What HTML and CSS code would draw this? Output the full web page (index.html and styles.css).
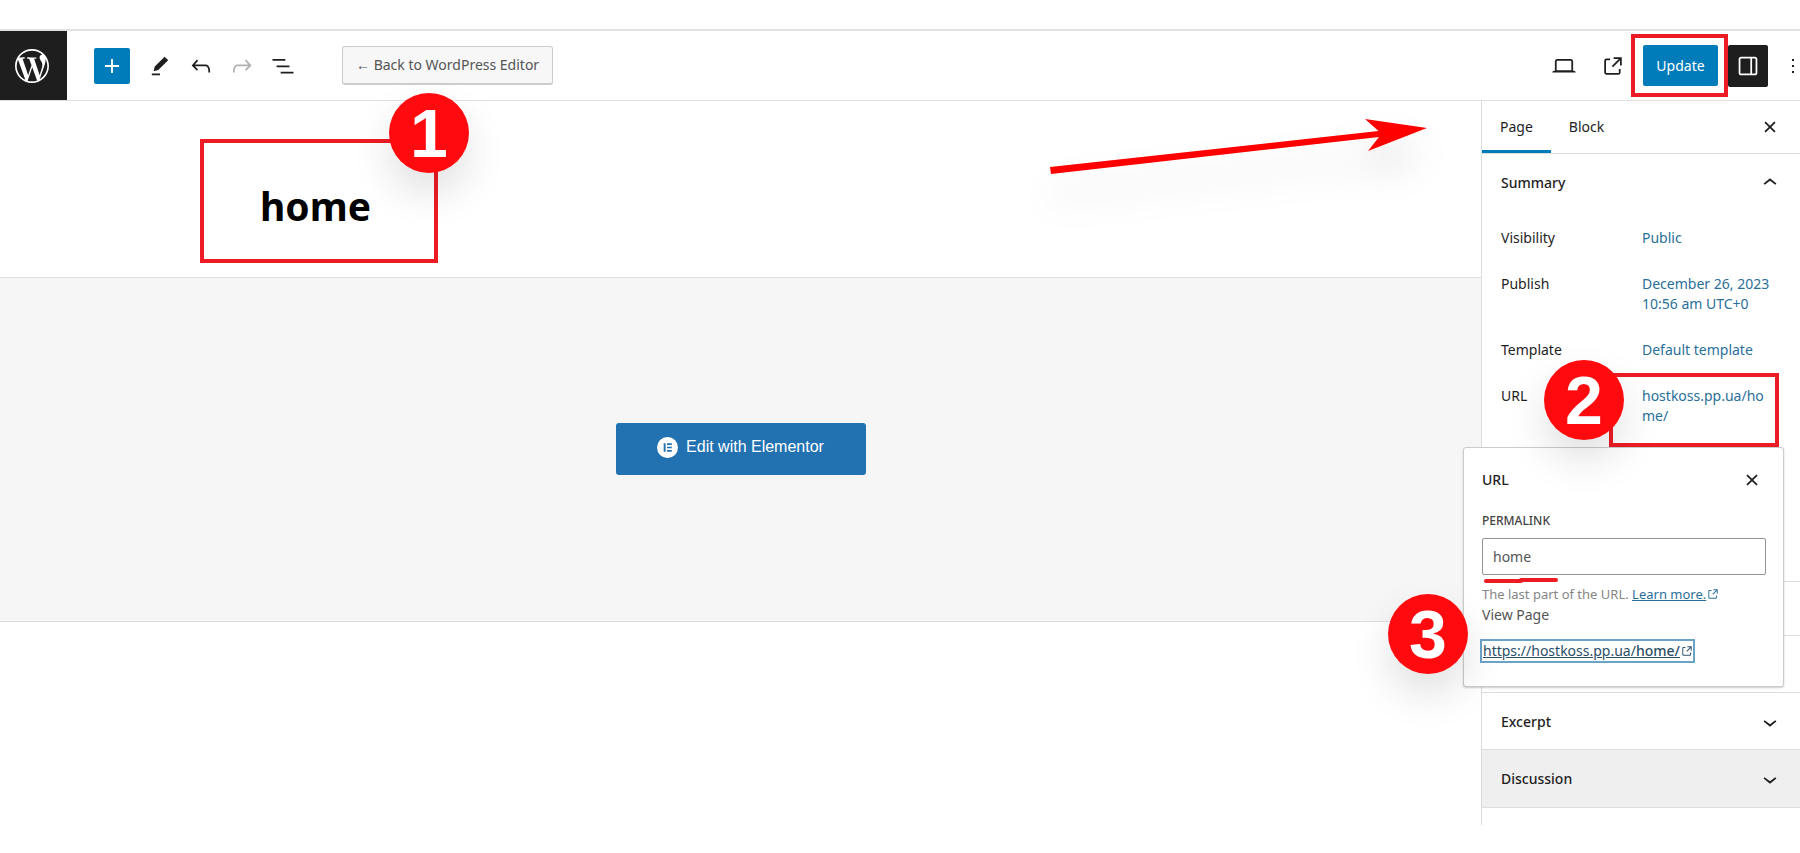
FILE: index.html
```html
<!DOCTYPE html>
<html lang="en">
<head>
<meta charset="utf-8">
<title>Edit Page</title>
<link rel="stylesheet" href="styles.css">
</head>
<body>
<div class="editor">
  <header class="toolbar">
    <a class="wp-logo" href="#" aria-label="View Pages">
      <svg viewBox="0 0 24 24"><path d="M21.469 6.825c.84 1.537 1.318 3.3 1.318 5.175 0 3.979-2.156 7.456-5.363 9.325l3.295-9.527c.615-1.54.82-2.771.82-3.864 0-.405-.026-.78-.07-1.11m-7.981.105c.647-.03 1.232-.105 1.232-.105.582-.075.514-.93-.067-.899 0 0-1.755.135-2.88.135-1.064 0-2.85-.15-2.85-.15-.585-.03-.661.855-.075.885 0 0 .54.061 1.125.09l1.68 4.605-2.37 7.08L5.354 6.9c.649-.03 1.234-.1 1.234-.1.585-.075.516-.93-.065-.896 0 0-1.746.138-2.874.138-.2 0-.438-.008-.69-.015C4.911 3.15 8.235 1.215 12 1.215c2.809 0 5.365 1.072 7.286 2.833-.046-.003-.091-.009-.141-.009-1.06 0-1.812.923-1.812 1.914 0 .89.513 1.643 1.06 2.531.411.72.89 1.643.89 2.977 0 .915-.354 1.994-.821 3.479l-1.075 3.585-3.9-11.61.001.014zM12 22.784c-1.059 0-2.081-.153-3.048-.437l3.237-9.406 3.315 9.087c.024.053.05.101.078.149-1.12.393-2.325.609-3.582.609M1.211 12c0-1.564.336-3.05.935-4.39L7.29 21.709C3.694 19.96 1.212 16.271 1.211 12M12 0C5.385 0 0 5.385 0 12s5.385 12 12 12 12-5.385 12-12S18.615 0 12 0"/></svg>
    </a>
    <div class="tools">
      <button class="tool tool-add" aria-label="Add block"><svg class="icon" viewBox="0 0 24 24"><path d="M18 11.2h-5.2V6h-1.6v5.2H6v1.6h5.2V18h1.6v-5.2H18z"/></svg></button>
      <button class="tool" aria-label="Tools"><svg class="icon" viewBox="0 0 24 24"><path d="m19 7-3-3-8.5 8.5-1 4 4-1L19 7Zm-7 11.5H5V20h7v-1.5Z"/></svg></button>
      <button class="tool" aria-label="Undo"><svg class="icon" viewBox="0 0 24 24"><path d="M18.3 11.7c-.6-.6-1.4-.9-2.3-.9H6.7l2.9-3.3-1.1-1-4.5 5L8.5 16l1-1-2.7-2.7H16c.5 0 .9.2 1.3.5 1 1 1 3.4 1 4.5v.3h1.5v-.2c0-1.5 0-4.3-1.5-5.7z"/></svg></button>
      <button class="tool tool-off" aria-label="Redo"><svg class="icon" viewBox="0 0 24 24"><path d="M15.6 6.5l-1.1 1 2.9 3.3H8c-.9 0-1.7.3-2.3.9-1.4 1.5-1.4 4.2-1.4 5.6v.2h1.5v-.3c0-1.1 0-3.5 1-4.5.3-.3.7-.5 1.3-.5h9.2L14.5 15l1.1 1.1 4.6-4.6-4.6-5z"/></svg></button>
      <button class="tool" aria-label="Document overview"><svg class="icon" viewBox="0 0 24 24"><path d="M3 6h11v1.5H3V6Zm3.5 5.5h11V13h-11v-1.5ZM21 17H10v1.5h11V17Z"/></svg></button>
    </div>
    <button class="back">← Back to WordPress Editor</button>
    <div class="actions">
      <button class="tool" aria-label="Preview"><svg class="icon" viewBox="0 0 24 24"><path d="M20.5 16h-.7V8c0-1.1-.9-2-2-2H6.2c-1.1 0-2 .9-2 2v8h-.7c-.8 0-1.5.7-1.5 1.5h20c0-.8-.7-1.5-1.5-1.5zM5.7 8c0-.3.2-.5.5-.5h11.6c.3 0 .5.2.5.5v7.6H5.7V8z"/></svg></button>
      <button class="tool" aria-label="View page"><svg class="icon" viewBox="0 0 24 24"><path d="M19.5 4.5h-7V6h4.44l-5.97 5.97 1.06 1.06L18 7.06v4.44h1.5v-7Zm-13 1a2 2 0 0 0-2 2v10a2 2 0 0 0 2 2h10a2 2 0 0 0 2-2v-3H17v3a.5.5 0 0 1-.5.5h-10a.5.5 0 0 1-.5-.5v-10a.5.5 0 0 1 .5-.5h3V5.5h-3Z"/></svg></button>
      <div class="marked-update"><button class="update">Update</button></div>
      <button class="settings" aria-label="Settings"><svg class="icon" viewBox="0 0 24 24"><path d="M18 4H6c-1.1 0-2 .9-2 2v12c0 1.1.9 2 2 2h12c1.1 0 2-.9 2-2V6c0-1.1-.9-2-2-2zm-4 14.5H6c-.3 0-.5-.2-.5-.5V6c0-.3.2-.5.5-.5h8v13zm4.5-.5c0 .3-.2.5-.5.5h-2.5v-13H18c.3 0 .5.2.5.5v12z"/></svg></button>
      <button class="more" aria-label="Options"><svg viewBox="0 0 4 16"><path d="M1 1h2v2H1zM1 7h2v2H1zM1 13h2v2H1z"/></svg></button>
    </div>
  </header>

  <div class="body">
    <main class="canvas">
      <div class="title-area">
        <div class="title-mark">
          <h1 class="title">home</h1>
          <span class="badge badge-one">1</span>
        </div>
        <svg class="arrow" viewBox="0 0 440 120"><path d="M30 67 358.500 31 345 19 407 28 348 51 359 37 31 74Z"/></svg>
      </div>
      <div class="elementor">
        <button class="elementor-button">
          <svg class="elementor-icon" viewBox="0 0 22 22"><circle cx="11" cy="11" r="11"/><path d="M7 6.500h2v9H7zM10.500 6.500h5v1.800h-5zM10.500 10.100h5v1.800h-5zM10.500 13.700h5v1.800h-5z"/></svg>
          <span>Edit with Elementor</span>
        </button>
      </div>
    </main>

    <aside class="sidebar">
      <div class="tabs">
        <button class="tab tab-active">Page</button>
        <button class="tab">Block</button>
        <button class="icon-button" aria-label="Close settings"><svg class="icon" viewBox="0 0 24 24"><path d="M12 13.060l3.712 3.713 1.061-1.060L13.061 12l3.712-3.712-1.060-1.060L12 10.938 8.288 7.227l-1.061 1.060L10.939 12l-3.712 3.712 1.060 1.061L12 13.061z"/></svg></button>
      </div>
      <section class="summary">
        <button class="panel-head">Summary <svg class="icon" viewBox="0 0 24 24"><path d="M6.500 12.400L12 8l5.500 4.400-.9 1.200L12 10l-4.500 3.600-1-1.200z"/></svg></button>
        <dl class="rows">
          <div class="row"><dt>Visibility</dt><dd><a href="#">Public</a></dd></div>
          <div class="row"><dt>Publish</dt><dd><a href="#">December 26, 2023<br>10:56 am UTC+0</a></dd></div>
          <div class="row"><dt>Template</dt><dd><a href="#">Default template</a></dd></div>
          <div class="row row-url"><dt>URL</dt><dd><a href="#">hostkoss.pp.ua/ho<wbr>me/</a></dd></div>
        </dl>
        <div class="url-mark"></div>
        <div class="popover" role="dialog" aria-label="URL">
          <div class="popover-head">
            <h2>URL</h2>
            <button class="icon-button" aria-label="Close"><svg class="icon" viewBox="0 0 24 24"><path d="M12 13.060l3.712 3.713 1.061-1.060L13.061 12l3.712-3.712-1.060-1.060L12 10.938 8.288 7.227l-1.061 1.060L10.939 12l-3.712 3.712 1.060 1.061L12 13.061z"/></svg></button>
          </div>
          <label class="label" for="permalink">PERMALINK</label>
          <div class="field">
            <input id="permalink" type="text" value="home">
            <svg class="scribble" viewBox="0 0 76 8"><path d="M3 5H38M38 4H73"/></svg>
          </div>
          <p class="help"><span>The last part of the URL. <a href="#">Learn more.</a></span><svg class="ext" viewBox="4 4 16 16"><path d="M19.500 4.500h-7V6h4.440l-5.970 5.970 1.060 1.060L18 7.060v4.440h1.500v-7Zm-13 1a2 2 0 0 0-2 2v10a2 2 0 0 0 2 2h10a2 2 0 0 0 2-2v-3H17v3a.5.5 0 0 1-.5.5h-10a.5.5 0 0 1-.5-.5v-10a.5.5 0 0 1 .5-.5h3V5.500h-3Z"/></svg></p>
          <p class="view">View Page</p>
          <a class="page-link" href="#"><span class="url">https://hostkoss.pp.ua/<b>home/</b></span><svg class="ext" viewBox="4 4 16 16"><path d="M19.500 4.500h-7V6h4.440l-5.970 5.970 1.060 1.060L18 7.060v4.440h1.500v-7Zm-13 1a2 2 0 0 0-2 2v10a2 2 0 0 0 2 2h10a2 2 0 0 0 2-2v-3H17v3a.5.5 0 0 1-.5.5h-10a.5.5 0 0 1-.5-.5v-10a.5.5 0 0 1 .5-.5h3V5.500h-3Z"/></svg></a>
          <span class="badge badge-three">3</span>
        </div>
        <span class="badge badge-two">2</span>
      </section>
      <div class="panel panel-short"></div>
      <div class="panel"></div>
      <div class="panel"><button class="panel-head">Excerpt <svg class="icon" viewBox="0 0 24 24"><path d="M17.500 11.600L12 16l-5.500-4.400.9-1.200L12 14l4.500-3.600 1 1.200z"/></svg></button></div>
      <div class="panel panel-hover"><button class="panel-head">Discussion <svg class="icon" viewBox="0 0 24 24"><path d="M17.500 11.600L12 16l-5.500-4.400.9-1.200L12 14l4.500-3.600 1 1.200z"/></svg></button></div>
      <div class="panel-end"></div>
    </aside>
  </div>
</div>
</body>
</html>
```
FILE: styles.css
```css
* { box-sizing: border-box; }

body {
  margin: 0;
  background: #fff;
  color: #1e1e1e;
  font: 14px/20px "Noto Sans", "Open Sans", sans-serif;
  overflow-x: hidden;
}

button {
  border: 0;
  padding: 0;
  background: none;
  color: inherit;
  font: inherit;
}

svg { display: block; fill: currentColor; flex: none; }
h1, h2, p, dl, dd { margin: 0; }
a { color: #2a6f9a; text-decoration: none; }

.icon { width: 28px; height: 28px; }

.editor { padding-top: 29px; }

/* Toolbar */
.toolbar {
  display: flex;
  align-items: center;
  height: 72px;
  border-top: 2px solid #e2e2e2;
  border-bottom: 1px solid #e0e0e0;
}

.wp-logo {
  display: flex;
  align-items: center;
  justify-content: center;
  width: 67px;
  height: 100%;
  padding-right: 3px;
  background: #1e1e1e;
  color: #fff;
}
.wp-logo svg { width: 34px; height: 34px; }

.tools { display: flex; gap: 5px; margin-left: 27px; }
.tool {
  display: flex;
  align-items: center;
  justify-content: center;
  width: 36px;
  height: 36px;
}
.tool-add {
  margin-right: 7px;
  border-radius: 2px;
  background: #007cba;
  color: #fff;
}
.tool-off { color: #b0b0b0; }

.back {
  height: 39px;
  margin-left: 41px;
  padding: 0 13px;
  border: 1px solid #ccc;
  border-bottom-width: 2px;
  border-radius: 3px;
  background: #f7f7f7;
  color: #555;
}

.actions { display: flex; align-items: center; margin-left: auto; }
.actions .tool + .tool { margin-left: 13px; }

.marked-update {
  padding: 7px 6px 7px 8px;
  border: 4px solid #ed1c24;
}
.update {
  display: block;
  width: 75px;
  height: 41px;
  border-radius: 2px;
  background: #007cba;
  color: #fff;
}
.settings {
  display: flex;
  align-items: center;
  justify-content: center;
  width: 40px;
  height: 42px;
  border-radius: 2px;
  background: #1e1e1e;
  color: #fff;
}
.more { margin: 0 5px 0 23px; }
.more svg { width: 4px; height: 16px; }

/* Canvas */
.body { display: flex; }
.canvas { flex: 1; min-width: 0; }

.title-area { position: relative; padding: 38px 0 14px 200px; }
.title-mark {
  position: relative;
  width: 238px;
  height: 124px;
  padding: 39px 0 0 56px;
  border: 4px solid #ed1c24;
}
.title {
  color: #000;
  font-size: 39px;
  line-height: 48px;
  font-weight: 700;
}

.badge {
  position: absolute;
  width: 80px;
  height: 80px;
  border-radius: 50%;
  background: #ff0a0e;
  box-shadow: 0 20px 40px rgba(0, 0, 0, 0.12);
  color: #fff;
  font: 700 68px/80px "Liberation Sans", Arial, sans-serif;
  text-align: center;
}
.badge-one { top: -50px; right: -35px; }
.badge-two { top: 206px; left: 62px; }
.badge-three { top: 146px; left: -76px; }

.arrow {
  position: absolute;
  top: -1px;
  right: 21px;
  width: 440px;
  height: 120px;
  overflow: visible;
  fill: #f00;
  filter: drop-shadow(0 24px 18px rgba(0, 0, 0, 0.12));
}

.elementor {
  display: flex;
  justify-content: center;
  height: 345px;
  padding-top: 145px;
  border-top: 1px solid #ddd;
  border-bottom: 1px solid #ddd;
  background: #f6f6f6;
}
.elementor-button {
  display: flex;
  align-items: center;
  justify-content: center;
  gap: 8px;
  width: 250px;
  height: 52px;
  padding-bottom: 4px;
  border-radius: 3px;
  background: #2271b1;
  color: #fff;
  font: 16px/20px "Liberation Sans", Arial, sans-serif;
}
.elementor-icon { width: 21px; height: 21px; }
.elementor-icon path { fill: #2271b1; }

/* Sidebar */
.sidebar { width: 319px; border-left: 1px solid #ddd; }

.tabs {
  display: flex;
  height: 53px;
  border-bottom: 1px solid #ddd;
}
.tab { padding: 0 18px; }
.tab-active { border-bottom: 3px solid #007cba; padding-top: 3px; }
.icon-button { margin-left: auto; }
.tabs .icon-button { margin-right: 16px; }

.panel-head {
  display: flex;
  align-items: center;
  justify-content: space-between;
  width: 100%;
  height: 57px;
  padding: 0 16px 0 19px;
  font-weight: 500;
}

.summary { position: relative; height: 427px; }

.rows { padding: 17px 16px 0 19px; }
.row { display: flex; margin-bottom: 26px; }
.row dt { width: 141px; }
.row dd { flex: 1; white-space: nowrap; }
.row-url dd { white-space: normal; }

.url-mark {
  position: absolute;
  top: 219px;
  left: 127px;
  width: 170px;
  height: 74px;
  border: 4px solid #ed1c24;
}

.popover {
  position: absolute;
  top: 293px;
  left: -19px;
  width: 321px;
  padding: 18px 17px 23px 18px;
  border: 1px solid #ccc;
  border-radius: 3px;
  background: #fff;
  box-shadow: 0 1px 2px rgba(0, 0, 0, 0.2);
}
.popover-head { display: flex; align-items: center; }
.popover-head h2 { font-size: 14px; font-weight: 500; }
.label {
  display: block;
  margin: 17px 0 7px;
  color: #444;
  font-size: 12px;
  font-weight: 500;
}
.field { position: relative; }
.field input {
  display: block;
  width: 100%;
  height: 37px;
  padding: 0 10px;
  border: 1px solid #949494;
  border-radius: 2px;
  background: #fff;
  color: #555;
  font: inherit;
}
.scribble {
  position: absolute;
  top: 38px;
  left: 1px;
  width: 76px;
  height: 8px;
  fill: none;
  stroke: #ed1c24;
  stroke-width: 4;
  stroke-linecap: round;
}
.help {
  display: flex;
  align-items: center;
  gap: 2px;
  margin-top: 9px;
  color: #858585;
  font-size: 13px;
}
.help a { text-decoration: underline; }
.ext { width: 10px; height: 10px; color: #2a6f9a; }
.view { margin-top: 1px; color: #555; }
.page-link {
  display: inline-flex;
  align-items: center;
  gap: 2px;
  margin: 14px 0 0 -2px;
  padding: 0 1px;
  border: 2px solid #6ba3c8;
  color: #2c4f66;
}
.page-link .url { text-decoration: underline; }
.page-link b { font-weight: 500; }
.page-link .ext { color: inherit; }

.panel { height: 57px; border-top: 1px solid #ddd; }
.panel-short { height: 54px; }
.panel-hover { height: 58px; background: #efefef; }
.panel-end { height: 18px; border-top: 1px solid #ddd; }
```
